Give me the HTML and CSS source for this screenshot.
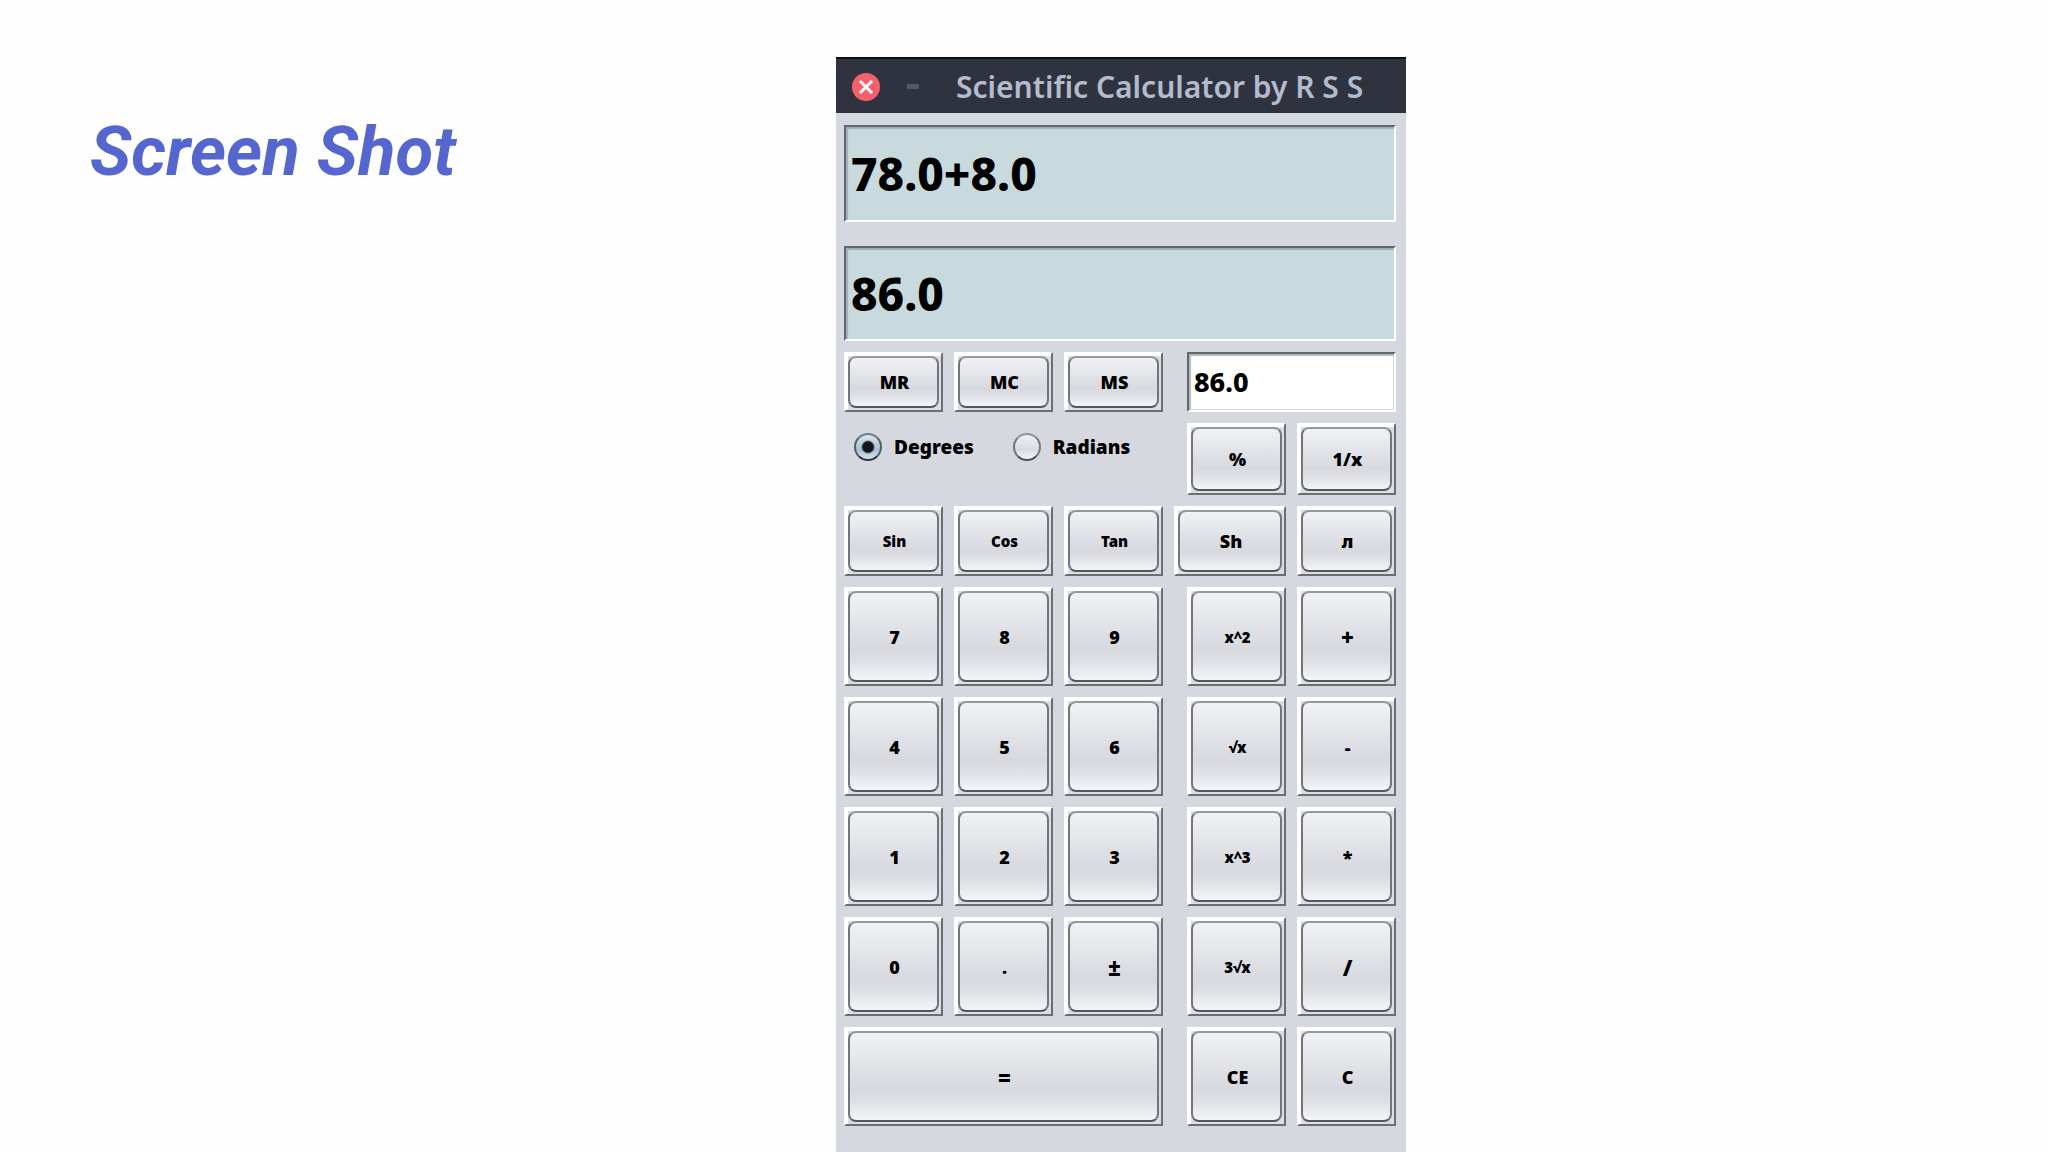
FILE: index.html
```html
<!DOCTYPE html>
<html lang="en">
<head>
  <meta charset="UTF-8">
  <meta name="viewport" content="width=device-width, initial-scale=1.0">
  <title>Scientific Calculator by R S S</title>
  <link rel="stylesheet" href="styles.css">
</head>
<body>
  <main class="page">
    <h1 class="page-title">Screen Shot</h1>

    <section class="calculator">
      <header class="titlebar">
        <button type="button" class="window-button" aria-label="Close">
          <svg width="28" height="28" viewBox="0 0 28 28">
            <circle cx="14" cy="14" r="14" fill="#f4606c"/>
            <path d="M8 8L20 20M20 8L8 20" stroke="#fff" stroke-width="3"/>
          </svg>
        </button>
        <button type="button" class="window-button" aria-label="Minimize">
          <svg width="12" height="28" viewBox="0 0 12 28">
            <rect y="11" width="12" height="5" fill="#555963"/>
          </svg>
        </button>
        <h2 class="window-title">Scientific Calculator by R S S</h2>
      </header>

      <div class="calculator-body">
        <input class="display" type="text" aria-label="Expression" value="78.0+8.0" readonly>
        <input class="display" type="text" aria-label="Result" value="86.0" readonly>

        <div class="keypad">
          <button type="button" class="key">MR</button>
          <button type="button" class="key">MC</button>
          <button type="button" class="key">MS</button>
          <input class="memory" type="text" aria-label="Memory" value="86.0">

          <div class="angle-mode">
            <label class="angle-label"><input class="radio" type="radio" name="angle" checked>Degrees</label>
            <label class="angle-label"><input class="radio" type="radio" name="angle">Radians</label>
          </div>
          <button type="button" class="key key-right">%</button>
          <button type="button" class="key">1/x</button>

          <button type="button" class="key key-small">Sin</button>
          <button type="button" class="key key-small">Cos</button>
          <button type="button" class="key key-small">Tan</button>
          <button type="button" class="key key-shift">Sh</button>
          <button type="button" class="key">л</button>

          <button type="button" class="key">7</button>
          <button type="button" class="key">8</button>
          <button type="button" class="key">9</button>
          <button type="button" class="key key-small key-right">x^2</button>
          <button type="button" class="key key-large">+</button>

          <button type="button" class="key">4</button>
          <button type="button" class="key">5</button>
          <button type="button" class="key">6</button>
          <button type="button" class="key key-small key-right">√x</button>
          <button type="button" class="key">-</button>

          <button type="button" class="key">1</button>
          <button type="button" class="key">2</button>
          <button type="button" class="key">3</button>
          <button type="button" class="key key-small key-right">x^3</button>
          <button type="button" class="key">*</button>

          <button type="button" class="key">0</button>
          <button type="button" class="key">.</button>
          <button type="button" class="key key-large">±</button>
          <button type="button" class="key key-small key-right">3√x</button>
          <button type="button" class="key key-large">/</button>

          <button type="button" class="key key-large key-equals">=</button>
          <button type="button" class="key key-right">CE</button>
          <button type="button" class="key">C</button>
        </div>
      </div>
    </section>
  </main>
</body>
</html>
```

FILE: styles.css
```css
* {
  box-sizing: border-box;
}

body {
  margin: 0;
  background-color: #fefefe;
  font-family: "Noto Sans", "Open Sans", sans-serif;
}

.page {
  display: grid;
  grid-template-columns: 418fr 285fr 321fr;
  min-height: 100vh;
  padding-top: 57px;
}

.page-title {
  margin: 0;
  padding: 55px 0 0 90px;
  color: #5666cf;
  font-family: Roboto, sans-serif;
  font-size: 69px;
  font-style: italic;
  font-weight: 700;
  line-height: 80px;
}

.calculator {
  display: flex;
  flex-direction: column;
  background-color: #d6d8df;
}

.titlebar {
  display: flex;
  align-items: center;
  height: 56px;
  padding: 2px 16px 0;
  border-top: 2px solid #0d0f14;
  background-color: #2f3340;
}

.window-button {
  display: flex;
  margin-right: 27px;
  padding: 0;
  border: none;
  background: none;
}

.window-title {
  flex: 1;
  margin: 0;
  padding-left: 10px;
  color: #b3bccd;
  font-size: 30px;
  font-weight: 600;
  line-height: 36px;
  white-space: nowrap;
}

.calculator-body {
  display: flex;
  flex-direction: column;
  padding: 12px 10px 24px 8px;
}

.display,
.memory {
  width: 100%;
  min-width: 0;
  border: 2px solid;
  border-color: #5f686d #fff #fff #5f686d;
  border-radius: 0;
  outline: none;
  color: #000;
  font-family: inherit;
  font-weight: 800;
}

.display {
  height: 97px;
  padding: 0 5px 2px;
  background-color: #c8dadd;
  box-shadow: inset 2px 2px 1px #9faeb2;
  font-size: 46px;
}

.display + .display {
  height: 95px;
  margin: 24px 0 11px;
}

.memory {
  grid-column: 5 / 7;
  padding: 0 5px 2px;
  background-color: #fff;
  box-shadow: inset 2px 2px 1px #b5b7bc, inset -1px -1px 0 #d3d5da;
  font-size: 27px;
}

/* the fourth column is the narrow space between digits and operators */
.keypad {
  display: grid;
  grid-template-columns: repeat(3, 1fr) 2px repeat(2, 1fr);
  grid-template-rows: 60px 72px 70px repeat(5, 99px);
  gap: 11px;
}

.key {
  position: relative;
  isolation: isolate;
  min-width: 0;
  padding: 0 0 0 2px;
  border: 2px solid;
  border-color: #fff #6c6e74 #6c6e74 #fff;
  background-color: #dcdee3;
  box-shadow: inset 2px 2px 0 #fff;
  color: #000;
  font-family: inherit;
  font-size: 18px;
  font-weight: 900;
}

.key::before {
  content: "";
  position: absolute;
  inset: 2px;
  z-index: -1;
  border: 2px solid;
  border-color: #96989d #73757b #55575d #73757b;
  border-radius: 8px;
  background: linear-gradient(#f1f2f5, #e0e2e7 40%, #d7d9df 65%, #dfe1e6 80%, #f4f5f9);
}

.key-small {
  font-size: 15px;
}

.key-large {
  font-size: 22px;
}

.key-right {
  grid-column: 5;
}

.key-shift {
  grid-column: 4 / 6;
}

.key-equals {
  grid-column: 1 / 4;
}

.angle-mode {
  grid-column: 1 / 4;
  display: flex;
  align-items: flex-start;
  gap: 39px;
  padding: 10px 0 0 10px;
}

.angle-label {
  display: flex;
  align-items: center;
  gap: 12px;
  font-size: 19px;
  font-weight: 900;
  line-height: 28px;
}

.radio {
  appearance: none;
  width: 28px;
  height: 28px;
  margin: 0;
  border: 2px solid;
  border-color: #94969c #77797f #4d4f55;
  border-radius: 50%;
  background: linear-gradient(#f0f1f4, #d9dbe1 60%, #f1f2f6);
}

.radio:checked {
  border-color: #6e7f8c #4f5f6c #2c363f;
  background: radial-gradient(circle, #11161b 5px, transparent 7px), linear-gradient(#dde7ee, #a9bfce 60%, #d2e2ec);
}
```
